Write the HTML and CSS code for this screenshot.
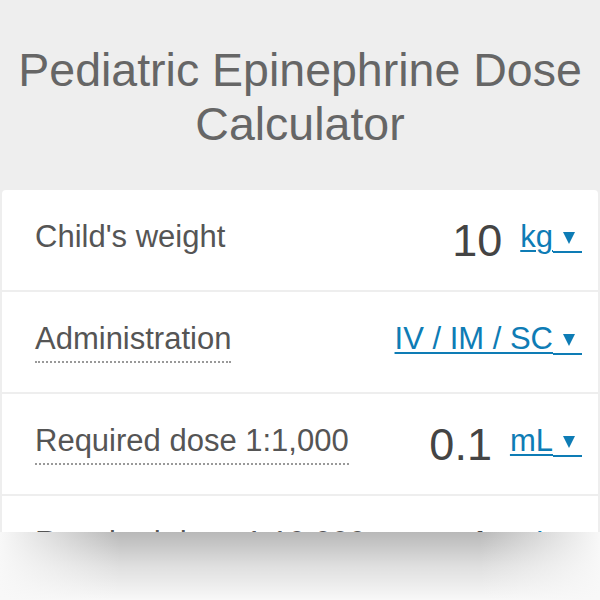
FILE: index.html
```html
<!DOCTYPE html>
<html lang="en">
  <head>
    <meta charset="UTF-8" />
    <meta name="viewport" content="width=device-width, initial-scale=1.0" />
    <title>Pediatric Epinephrine Dose Calculator</title>
    <link rel="stylesheet" href="styles.css">
  </head>
  <body>
    <header class="calc-header">
      <h1>Pediatric Epinephrine Dose Calculator</h1>
    </header>

    <div class="calc-viewport">
      <div class="calc-card">
        <div class="calc-row">
          <span class="calc-label">Child's weight</span>
          <span class="calc-value">10</span>
          <a class="calc-unit" href="#">kg<span class="caret"></span></a>
        </div>
        <div class="calc-row">
          <span class="calc-label has-tip">Administration</span>
          <a class="calc-unit" href="#">IV / IM / SC<span class="caret"></span></a>
        </div>
        <div class="calc-row">
          <span class="calc-label has-tip">Required dose 1:1,000</span>
          <span class="calc-value">0.1</span>
          <a class="calc-unit" href="#">mL<span class="caret"></span></a>
        </div>
        <div class="calc-row">
          <span class="calc-label has-tip">Required dose 1:10,000</span>
          <span class="calc-value">1</span>
          <a class="calc-unit" href="#">mL<span class="caret"></span></a>
        </div>
      </div>
    </div>

    <div class="calc-fade"></div>
  </body>
</html>
```

FILE: styles.css
```css
/* omni-style calculator card, cut off at the bottom */
body {
  margin: 0;
  background-color: #eeeeee;
  font-family: "Liberation Sans", Arial, sans-serif;
  height: 600px;
  overflow: hidden;
}
.calc-header {
  padding: 43px 8px 39px;
}
.calc-header h1 {
  margin: 0;
  text-align: center;
  font-weight: normal;
  font-size: 46.5px;
  line-height: 54px;
  color: #666;
}
.calc-viewport {
  height: 342px;
  overflow: hidden;
  padding: 0 2px;
}
.calc-card {
  background-color: #ffffff;
  border-radius: 4px 4px 0 0;
}
.calc-row {
  display: flex;
  align-items: center;
  gap: 18px;
  height: 100px;
  padding: 0 16px 0 33px;
  border-bottom: 2px solid #eeeeee;
}
.calc-label {
  margin-right: auto;
  font-size: 31px;
  color: #555;
  padding-bottom: 4px;
  border-bottom: 2px dotted transparent;
}
.calc-label.has-tip {
  border-bottom-color: #999;
}
.calc-value {
  font-size: 45px;
  color: #444;
  padding-top: 2px;
}
.calc-unit {
  font-size: 31px;
  line-height: 36px;
  color: #0e7cb5;
  text-decoration: underline;
  text-decoration-thickness: 2px;
  text-underline-offset: 3px;
  padding-bottom: 6px;
  white-space: nowrap;
}
.caret {
  display: inline-block;
  box-sizing: border-box;
  width: 29px;
  height: 21px;
  padding-right: 7px;
  border-bottom: 2px solid #0e7cb5;
  vertical-align: -6px;
}
.caret::before {
  content: "";
  display: block;
  width: 0;
  height: 0;
  margin-left: auto;
  border-left: 6px solid transparent;
  border-right: 6px solid transparent;
  border-top: 12px solid #0e7cb5;
}
.calc-fade {
  height: 68px;
  background-color: #f8f8f8;
  background-image: linear-gradient(
      to right,
      #f8f8f8,
      rgba(248, 248, 248, 0) 20%,
      rgba(248, 248, 248, 0) 80%,
      #f8f8f8
    ),
    linear-gradient(
      rgba(0, 0, 0, 0.26),
      rgba(0, 0, 0, 0.1) 50%,
      rgba(0, 0, 0, 0)
    );
}
```
